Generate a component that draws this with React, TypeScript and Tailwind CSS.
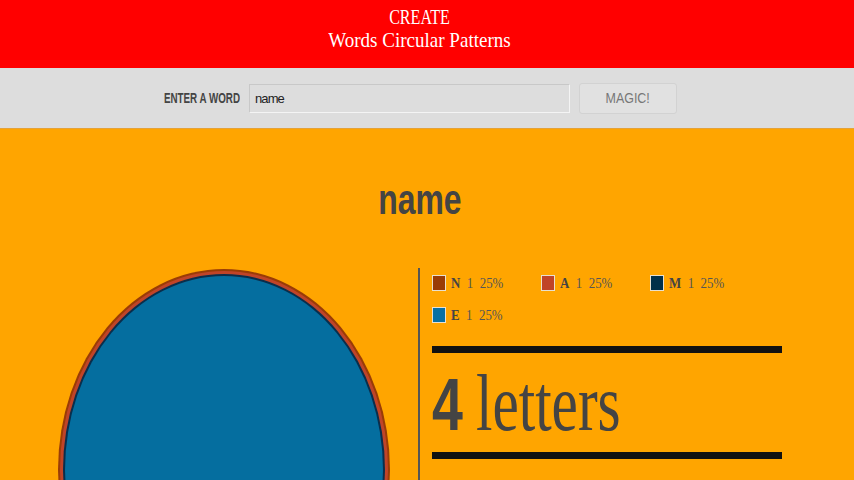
const letters = [
  { ch: "N", count: 1, pct: "25%", color: "bg-[#9a3c06]" },
  { ch: "A", count: 1, pct: "25%", color: "bg-[#c04428]" },
  { ch: "M", count: 1, pct: "25%", color: "bg-[#00304a]" },
  { ch: "E", count: 1, pct: "25%", color: "bg-[#0870a3]" },
];

function Rings() {
  // concentric ellipses, outer letter first
  return (
    <svg width="334" height="404" viewBox="0 0 334 404" className="block">
      <ellipse cx="167" cy="202" rx="166" ry="201" fill="#9a3c06" />
      <ellipse cx="167" cy="202" rx="164" ry="199" fill="#c04428" />
      <ellipse cx="167" cy="202" rx="161" ry="196" fill="#0a2e4c" />
      <ellipse cx="167" cy="202" rx="159" ry="194" fill="#056e9f" />
    </svg>
  );
}

export default function App() {
  return (
    <div className="min-h-screen bg-[#ffa500]">
      {/* Header */}
      <header className="h-[68px] bg-[#ff0000] pr-[15px] pt-[5px] text-center text-[22px] leading-[23px] text-white font-['Liberation_Serif',serif]">
        <div className="scale-x-[0.73]">CREATE</div>
        <div className="scale-x-[0.865]">Words Circular Patterns</div>
      </header>

      {/* Input bar */}
      <div className="flex h-[61px] items-center justify-center border-b border-[#e4a23a] bg-[#dddddd] pr-[49px] font-['Liberation_Sans',sans-serif]">
        <label className="w-[112px] origin-right scale-x-[0.7] text-right text-[14px] font-bold text-[#444]">
          ENTER A WORD
        </label>
        <input
          defaultValue="name"
          className="ml-[9px] h-[29px] w-[321px] border border-[#c8c8c8] border-b-[#f4f4f4] border-r-[#f4f4f4] bg-[#dddddd] px-[5px] text-[13px] tracking-[-0.9px] text-[#222] outline-none"
        />
        <button className="ml-[9px] h-[31px] w-[98px] rounded-[3px] border border-[#d2d2d2] bg-[#e1e1e1] text-[15px] text-[#777]">
          <span className="inline-block scale-x-[0.83]">MAGIC!</span>
        </button>
      </div>

      {/* Word title */}
      <h1 className="pr-[15px] pt-[50px] text-center text-[42px] font-bold leading-[42px] text-[#444] font-['Liberation_Sans',sans-serif]">
        <span className="inline-block scale-x-[0.76]">name</span>
      </h1>

      {/* Chart + stats */}
      <div className="mt-[47px] flex">
        <div className="w-[418px] shrink-0 pl-[57px]">
          <Rings />
        </div>
        <div className="min-h-[420px] border-l-2 border-[#555] pl-[12px] pt-[7px]">
          <div className="flex w-[350px] flex-wrap gap-y-[16px] font-['Liberation_Serif',serif] text-[15px] leading-[16px]">
            {letters.map((l) => (
              <div key={l.ch} className="flex h-[16px] w-[109px] items-center">
                <span className={`h-[16px] w-[14px] border border-[#e8e0d0] ${l.color}`} />
                <span className="ml-[5px] inline-block origin-left scale-x-[0.86] whitespace-pre text-[#555]">
                  <b className="text-[#444]">{l.ch}</b>
                  {"  "}
                  {l.count}
                  {"  "}
                  {l.pct}
                </span>
              </div>
            ))}
          </div>

          <div className="mt-[23px] h-[7px] w-[350px] bg-[#111]" />

          <div className="mt-[10px] flex h-[80px] items-baseline leading-[80px] text-[#444]">
            <span className="inline-block w-[44px] origin-left scale-x-[0.75] text-[74px] font-bold font-['Liberation_Sans',sans-serif]">
              4
            </span>
            <span className="inline-block origin-left scale-x-[0.74] text-[80px] font-['Liberation_Serif',serif]">
              letters
            </span>
          </div>

          <div className="mt-[9px] h-[7px] w-[350px] bg-[#111]" />
        </div>
      </div>
    </div>
  );
}
